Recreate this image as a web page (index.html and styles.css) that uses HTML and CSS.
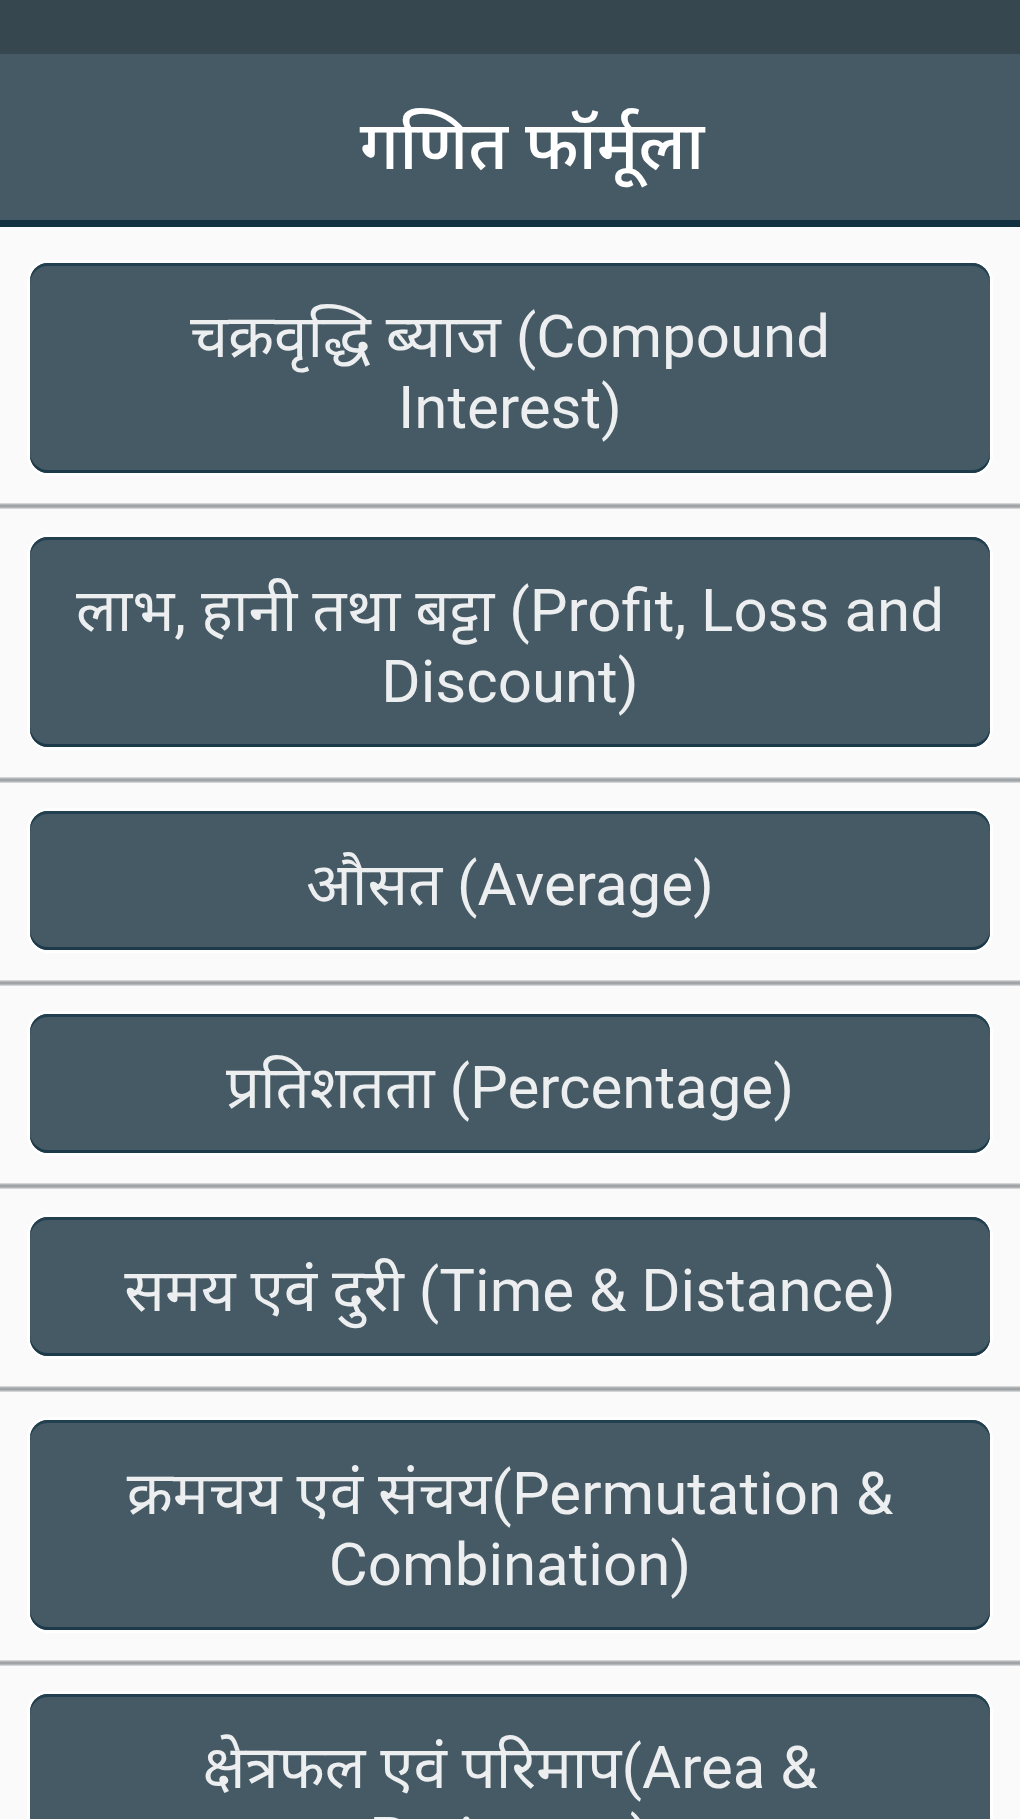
FILE: index.html
```html
<!DOCTYPE html>
<html lang="hi">
<head>
    <meta charset="UTF-8">
    <meta name="viewport" content="width=device-width, initial-scale=1.0">
    <title>गणित फॉर्मूला</title>
    <link rel="stylesheet" href="styles.css">
</head>
<body>
    <div class="screen">
        <div class="status-bar"></div>
        <header class="toolbar">
            <h1 class="toolbar-title">गणित फॉर्मूला</h1>
        </header>

        <ul class="formula-list">
            <li class="formula-item">
                <button type="button" class="formula-btn">चक्रवृद्धि ब्याज (Compound<br>Interest)</button>
            </li>
            <li class="formula-item">
                <button type="button" class="formula-btn">लाभ, हानी तथा बट्टा (Profit, Loss and<br>Discount)</button>
            </li>
            <li class="formula-item">
                <button type="button" class="formula-btn">औसत (Average)</button>
            </li>
            <li class="formula-item">
                <button type="button" class="formula-btn">प्रतिशतता (Percentage)</button>
            </li>
            <li class="formula-item">
                <button type="button" class="formula-btn">समय एवं दुरी (Time &amp; Distance)</button>
            </li>
            <li class="formula-item">
                <button type="button" class="formula-btn">क्रमचय एवं संचय(Permutation &amp;<br>Combination)</button>
            </li>
            <li class="formula-item">
                <button type="button" class="formula-btn">क्षेत्रफल एवं परिमाप(Area &amp;<br>Perimeter)</button>
            </li>
        </ul>
    </div>
</body>
</html>
```

FILE: styles.css
```css
html, body {
    margin: 0;
    padding: 0;
    height: 100%;
    overflow: hidden;
}

body {
    background-color: #fafafa;
    font-family: Roboto, "Noto Sans Devanagari", "Noto Sans", sans-serif;
}

.screen {
    height: 100vh;
    overflow: hidden;
}

.status-bar {
    height: 54px;
    background-color: #37474f;
}

.toolbar {
    height: 166px;
    background-color: #455a64;
    border-bottom: 7px solid #12303f;
    display: flex;
    align-items: center;
    justify-content: center;
    padding-left: 44px;
    box-sizing: content-box;
}

.toolbar-title {
    margin: 0;
    color: #ffffff;
    font-size: 68px;
    font-weight: 500;
    line-height: 1;
    padding-top: 18px;
}

.formula-list {
    list-style: none;
    margin: 0;
    padding: 8px 0 0;
}

.formula-item {
    padding: 28px 30px 0;
}

/* divider line under each row */
.formula-item::after {
    content: "";
    display: block;
    height: 6px;
    margin: 30px -30px 0;
    background: linear-gradient(#e3e4e5, #a0a4a6 35%, #a0a4a6 65%, #e3e4e5);
}

.formula-btn {
    display: block;
    width: 100%;
    padding: 38px 20px 30px;
    border: none;
    border-radius: 18px;
    background-color: #455a64;
    color: #eceef0;
    font-family: inherit;
    font-size: 60px;
    line-height: 71px;
    text-align: center;
    box-shadow: inset 0 3px 0 #22404f, inset 0 -3px 0 #1d3a4a, 0 0 0 3px #ffffff;
    cursor: pointer;
}
```
